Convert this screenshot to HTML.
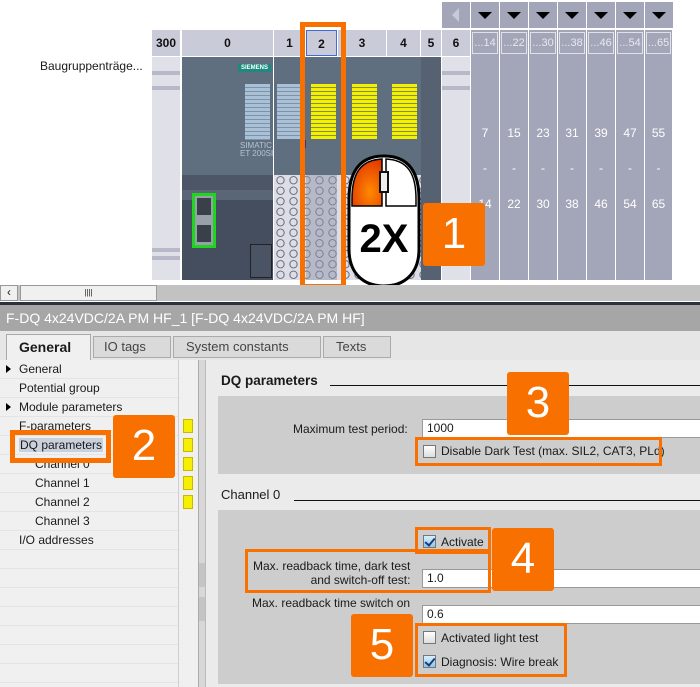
<!DOCTYPE html>
<html><head><meta charset="utf-8"><style>
*{box-sizing:border-box;margin:0;padding:0}
body{width:700px;height:687px;position:relative;overflow:hidden;background:#fff;font-family:"Liberation Sans","DejaVu Sans",sans-serif;font-size:12px;color:#1a1a1a}
.a{position:absolute}
.hd{position:absolute;top:30px;height:26px;background:#c9cbd9;font-weight:bold;font-size:12px;text-align:center;line-height:26px;color:#111}
.gc{position:absolute;top:30px;height:250px;background:#a3a6b9;width:28px;color:#fff;font-size:12px;text-align:center}
.gc .h{position:absolute;left:1px;top:2px;width:26px;height:22px;border:1px solid #dfe0e8;color:#e8e8f0;line-height:20px;font-size:11px}
.ar{position:absolute;top:2px;height:26px;width:28px;background:#a3a6b9}
.ar:after{content:"";position:absolute;left:7px;top:10px;border-left:7px solid transparent;border-right:7px solid transparent;border-top:7px solid #000}
.coil{position:absolute;background:repeating-linear-gradient(#f2f200 0 3px,#8a8a40 3px 4px)}
.coilb{position:absolute;background:repeating-linear-gradient(#a9c0d6 0 3px,#7d93a8 3px 4px)}
.term{position:absolute;background-color:#dcdde6;background-image:radial-gradient(circle,transparent 3px,#6a6f80 3.3px,#6a6f80 3.9px,transparent 4.4px);background-size:13px 10.5px}
.ob{position:absolute;border:3px solid #f77000}
.bd{position:absolute;background:#f77000;color:#fff;font-size:44px;text-align:center;border-radius:3px;line-height:62px;width:62px;height:63px}
.tr{position:absolute;left:0;width:178px;height:19px;border-bottom:1px solid #e4e4e4;font-size:12px;line-height:19px}
.tri{position:absolute;left:6px;top:5px;border-top:4px solid transparent;border-bottom:4px solid transparent;border-left:5px solid #000}
.ys{position:absolute;left:183px;width:10px;height:14px;background:#f5f000;border:1px solid #c8b800}
.inp{position:absolute;left:422px;width:290px;height:19px;background:#fff;border:1px solid #999;padding-left:4px;line-height:17px;font-size:12px}
.cb{position:absolute;width:13px;height:13px;border:1px solid #777;background:linear-gradient(#fff,#ddd)}
.cb.on{background:linear-gradient(#d8f0ff,#8cc8e8)}
.cb.on:after{content:"";position:absolute;left:3px;top:0px;width:4px;height:8px;border:solid #1c3a80;border-width:0 2px 2px 0;transform:rotate(40deg)}
.lb{position:absolute;font-size:12px;white-space:nowrap}
</style></head><body>
<div class="a" style="left:40px;top:59px;font-size:12px">Baugruppenträge...</div>
<div class="hd" style="left:152px;width:28px">300</div>
<div class="hd" style="left:182px;width:91px">0</div>
<div class="hd" style="left:274px;width:31px">1</div>
<div class="hd" style="left:306px;width:31px;border:1px solid #3d6bd8">2</div>
<div class="hd" style="left:338px;width:48px">3</div>
<div class="hd" style="left:387px;width:33px">4</div>
<div class="hd" style="left:421px;width:20px">5</div>
<div class="hd" style="left:442px;width:28px">6</div>
<div class="a" style="left:442px;top:2px;width:28px;height:26px;background:#a3a6b9"><div class="a" style="left:10px;top:6px;border-top:7px solid transparent;border-bottom:7px solid transparent;border-right:7px solid #c8cad8"></div></div>
<div class="a" style="left:152px;top:57px;width:28px;height:223px;background:#dfe0e8"></div>
<div class="a" style="left:152px;top:71px;width:28px;height:4px;background:#b8b9c8"></div>
<div class="a" style="left:152px;top:86px;width:28px;height:4px;background:#b8b9c8"></div>
<div class="a" style="left:152px;top:248px;width:28px;height:4px;background:#b8b9c8"></div>
<div class="a" style="left:152px;top:256px;width:28px;height:4px;background:#b8b9c8"></div>
<div class="a" style="left:442px;top:57px;width:28px;height:223px;background:#dfe0e8"></div>
<div class="a" style="left:442px;top:71px;width:28px;height:4px;background:#b8b9c8"></div>
<div class="a" style="left:442px;top:86px;width:28px;height:4px;background:#b8b9c8"></div>
<div class="a" style="left:182px;top:57px;width:91px;height:223px;background:#444e5e"></div>
<div class="a" style="left:182px;top:57px;width:91px;height:118px;background:#5f6f80"></div>
<div class="a" style="left:182px;top:175px;width:91px;height:15px;background:#4c5666"></div>
<div class="a" style="left:182px;top:190px;width:91px;height:10px;background:#5a6676"></div>
<div class="a" style="left:238px;top:64px;width:33px;height:8px;background:#1e8a7e;color:#fff;font-size:6px;text-align:center;line-height:8px;font-weight:bold">SIEMENS</div>
<div class="coilb" style="left:245px;top:84px;width:25px;height:56px"></div>
<div class="a" style="left:240px;top:142px;color:#b8c4d0;font-size:8px;line-height:8px">SIMATIC<br>ET 200SP</div>
<div class="a" style="left:192px;top:193px;width:24px;height:55px;border:3px solid #1ed61e;background:#9aa0aa"></div>
<div class="a" style="left:197px;top:198px;width:14px;height:17px;background:#3a404a"></div>
<div class="a" style="left:197px;top:225px;width:14px;height:17px;background:#3a404a"></div>
<div class="a" style="left:250px;top:244px;width:22px;height:34px;border:1px solid #222;background:#4a5464"></div>
<div class="a" style="left:274px;top:57px;width:147px;height:118px;background:#5f6f80"></div>
<div class="coilb" style="left:277px;top:84px;width:25px;height:55px"></div>
<div class="a" style="left:301px;top:140px;width:5px;height:8px;background:#2a3a8a"></div>
<div class="coil" style="left:311px;top:84px;width:25px;height:55px"></div>
<div class="coil" style="left:352px;top:84px;width:25px;height:55px"></div>
<div class="coil" style="left:392px;top:84px;width:25px;height:55px"></div>
<div class="a" style="left:421px;top:57px;width:20px;height:223px;background:#566272"></div>
<div class="term" style="left:274px;top:175px;width:147px;height:105px"></div>
<div class="a" style="left:306px;top:175px;width:31px;height:105px;background:#8f96a8;opacity:.5"></div>
<div class="ar" style="left:471px"></div><div class="ar" style="left:500px"></div><div class="ar" style="left:529px"></div><div class="ar" style="left:558px"></div><div class="ar" style="left:587px"></div><div class="ar" style="left:616px"></div><div class="ar" style="left:645px"></div>
<div class="gc" style="left:471px"><div class="h">...14</div><div class="a" style="left:0;width:28px;top:96px">7</div><div class="a" style="left:0;width:28px;top:131px">-</div><div class="a" style="left:0;width:28px;top:167px">14</div></div>
<div class="gc" style="left:500px"><div class="h">...22</div><div class="a" style="left:0;width:28px;top:96px">15</div><div class="a" style="left:0;width:28px;top:131px">-</div><div class="a" style="left:0;width:28px;top:167px">22</div></div>
<div class="gc" style="left:529px"><div class="h">...30</div><div class="a" style="left:0;width:28px;top:96px">23</div><div class="a" style="left:0;width:28px;top:131px">-</div><div class="a" style="left:0;width:28px;top:167px">30</div></div>
<div class="gc" style="left:558px"><div class="h">...38</div><div class="a" style="left:0;width:28px;top:96px">31</div><div class="a" style="left:0;width:28px;top:131px">-</div><div class="a" style="left:0;width:28px;top:167px">38</div></div>
<div class="gc" style="left:587px"><div class="h">...46</div><div class="a" style="left:0;width:28px;top:96px">39</div><div class="a" style="left:0;width:28px;top:131px">-</div><div class="a" style="left:0;width:28px;top:167px">46</div></div>
<div class="gc" style="left:616px"><div class="h">...54</div><div class="a" style="left:0;width:28px;top:96px">47</div><div class="a" style="left:0;width:28px;top:131px">-</div><div class="a" style="left:0;width:28px;top:167px">54</div></div>
<div class="gc" style="left:645px;width:27px"><div class="h" style="width:25px">...65</div><div class="a" style="left:0;width:27px;top:96px">55</div><div class="a" style="left:0;width:27px;top:131px">-</div><div class="a" style="left:0;width:27px;top:167px">65</div></div>
<div class="ob" style="left:300px;top:22px;width:46px;height:267px;border-width:5px"></div>
<svg class="a" style="left:346px;top:154px" width="76" height="135" viewBox="0 0 76 135">
<defs><radialGradient id="g" cx=".6" cy=".7" r=".8"><stop offset="0" stop-color="#ff8a00"/><stop offset="1" stop-color="#e03000"/></radialGradient></defs>
<path d="M38 2 C12 2 3 20 3 45 L3 95 C3 120 18 132 38 132 C58 132 73 120 73 95 L73 45 C73 20 64 2 38 2Z" fill="#fff" stroke="#000" stroke-width="3"/>
<path d="M36 5 C14 6 6 20 6 45 L6 52 L36 52 Z" fill="url(#g)" stroke="#000" stroke-width="1.5"/>
<path d="M40 5 C62 6 70 20 70 45 L70 52 L40 52 Z" fill="#fff" stroke="#000" stroke-width="1.5"/>
<rect x="33" y="17" width="10" height="22" fill="#111"/><rect x="35" y="19" width="6" height="18" fill="#eee"/>
<text x="38" y="98" text-anchor="middle" font-family="Liberation Sans" font-weight="bold" font-size="40" fill="#000">2X</text>
</svg>
<div class="bd" style="left:423px;top:203px">1</div>
<div class="a" style="left:0;top:285px;width:700px;height:16px;background:#c2c2c2"></div>
<div class="a" style="left:0;top:285px;width:18px;height:16px;background:#f0f0f0;border:1px solid #999;text-align:center;line-height:13px;font-size:12px">&#8249;</div>
<div class="a" style="left:20px;top:285px;width:137px;height:16px;background:#f0f0f0;border:1px solid #999;text-align:center;line-height:13px;font-size:8px">||||</div>
<div class="a" style="left:0;top:302px;width:700px;height:3px;background:#2b323e"></div>
<div class="a" style="left:0;top:305px;width:700px;height:26px;background:#a6a6a6;color:#fff;font-size:14px;line-height:26px;padding-left:6px">F-DQ 4x24VDC/2A PM HF_1 [F-DQ 4x24VDC/2A PM HF]</div>
<div class="a" style="left:0;top:331px;width:700px;height:29px;background:#e6e6e6"></div>
<div class="a" style="left:6px;top:334px;width:85px;height:26px;background:#f0f0f0;border:1px solid #aaa;border-bottom:none;font-size:14px;font-weight:bold;line-height:25px;padding-left:12px">General</div>
<div class="a" style="left:93px;top:336px;width:78px;height:22px;background:#dadada;border:1px solid #aaa;font-size:13px;line-height:20px;padding-left:10px;color:#444">IO tags</div>
<div class="a" style="left:173px;top:336px;width:148px;height:22px;background:#dadada;border:1px solid #aaa;font-size:13px;line-height:20px;padding-left:12px;color:#444">System constants</div>
<div class="a" style="left:323px;top:336px;width:68px;height:22px;background:#dadada;border:1px solid #aaa;font-size:13px;line-height:20px;padding-left:12px;color:#444">Texts</div>
<div class="a" style="left:0;top:360px;width:198px;height:327px;background:#f0f0f0"></div>
<div class="a" style="left:178px;top:360px;width:1px;height:327px;background:#cfcfcf"></div>
<div class="tr" style="top:360px"><span class="tri"></span><span style="padding-left:19px">General</span></div>
<div class="tr" style="top:379px;padding-left:19px">Potential group</div>
<div class="tr" style="top:398px"><span class="tri"></span><span style="padding-left:19px">Module parameters</span></div>
<div class="tr" style="top:417px;padding-left:19px">F-parameters</div>
<div class="tr" style="top:436px;padding-left:19px"><span style="background:#c9d1dd;padding:0 1px">DQ parameters</span></div>
<div class="tr" style="top:455px;padding-left:35px">Channel 0</div>
<div class="tr" style="top:474px;padding-left:35px">Channel 1</div>
<div class="tr" style="top:493px;padding-left:35px">Channel 2</div>
<div class="tr" style="top:512px;padding-left:35px">Channel 3</div>
<div class="tr" style="top:531px;padding-left:19px">I/O addresses</div>
<div class="tr" style="top:550px"></div><div class="tr" style="top:569px"></div><div class="tr" style="top:588px"></div><div class="tr" style="top:607px"></div><div class="tr" style="top:626px"></div><div class="tr" style="top:645px"></div><div class="tr" style="top:664px"></div>
<div class="ys" style="top:419px"></div><div class="ys" style="top:438px"></div><div class="ys" style="top:457px"></div><div class="ys" style="top:476px"></div><div class="ys" style="top:495px"></div>
<div class="a" style="left:198px;top:360px;width:8px;height:327px;background:#d8d8d8;border-left:1px solid #aaa;border-right:1px solid #bbb"></div>
<div class="a" style="left:199px;top:563px;width:6px;height:24px;background:#c4c4c4"></div>
<div class="a" style="left:199px;top:597px;width:6px;height:24px;background:#c4c4c4"></div>
<div class="ob" style="left:10px;top:430px;width:101px;height:33px;border-width:5px"></div>
<div class="bd" style="left:113px;top:415px">2</div>
<div class="a" style="left:206px;top:360px;width:494px;height:327px;background:#ebebeb"></div>
<div class="lb" style="left:221px;top:373px;font-weight:bold;font-size:13.5px">DQ parameters</div>
<div class="a" style="left:330px;top:385px;width:370px;height:1px;background:#111"></div>
<div class="a" style="left:218px;top:396px;width:482px;height:78px;background:#cdcdcd"></div>
<div class="lb" style="left:293px;top:422px">Maximum test period:</div>
<div class="inp" style="top:419px">1000</div>
<div class="cb" style="left:423px;top:445px"></div>
<div class="lb" style="left:441px;top:444px">Disable Dark Test (max. SIL2, CAT3, PLd)</div>
<div class="ob" style="left:415px;top:437px;width:247px;height:29px"></div>
<div class="bd" style="left:507px;top:372px">3</div>
<div class="lb" style="left:221px;top:487px;font-size:13px">Channel 0</div>
<div class="a" style="left:294px;top:500px;width:406px;height:1px;background:#111"></div>
<div class="a" style="left:218px;top:510px;width:482px;height:174px;background:#cdcdcd"></div>
<div class="cb on" style="left:423px;top:535px"></div>
<div class="lb" style="left:441px;top:535px">Activate</div>
<div class="ob" style="left:415px;top:527px;width:76px;height:27px"></div>
<div class="lb" style="left:253px;top:559px;text-align:right;line-height:14px">Max. readback time, dark test<br><span style="padding-left:56px">and switch-off test:</span></div>
<div class="inp" style="top:569px">1.0</div>
<div class="ob" style="left:245px;top:549px;width:246px;height:44px"></div>
<div class="bd" style="left:492px;top:528px">4</div>
<div class="lb" style="left:252px;top:596px">Max. readback time switch on</div>
<div class="inp" style="top:605px">0.6</div>
<div class="cb" style="left:423px;top:631px"></div>
<div class="lb" style="left:441px;top:631px">Activated light test</div>
<div class="cb on" style="left:423px;top:655px"></div>
<div class="lb" style="left:441px;top:655px">Diagnosis: Wire break</div>
<div class="ob" style="left:415px;top:623px;width:152px;height:54px"></div>
<div class="bd" style="left:351px;top:614px">5</div>
</body></html>
